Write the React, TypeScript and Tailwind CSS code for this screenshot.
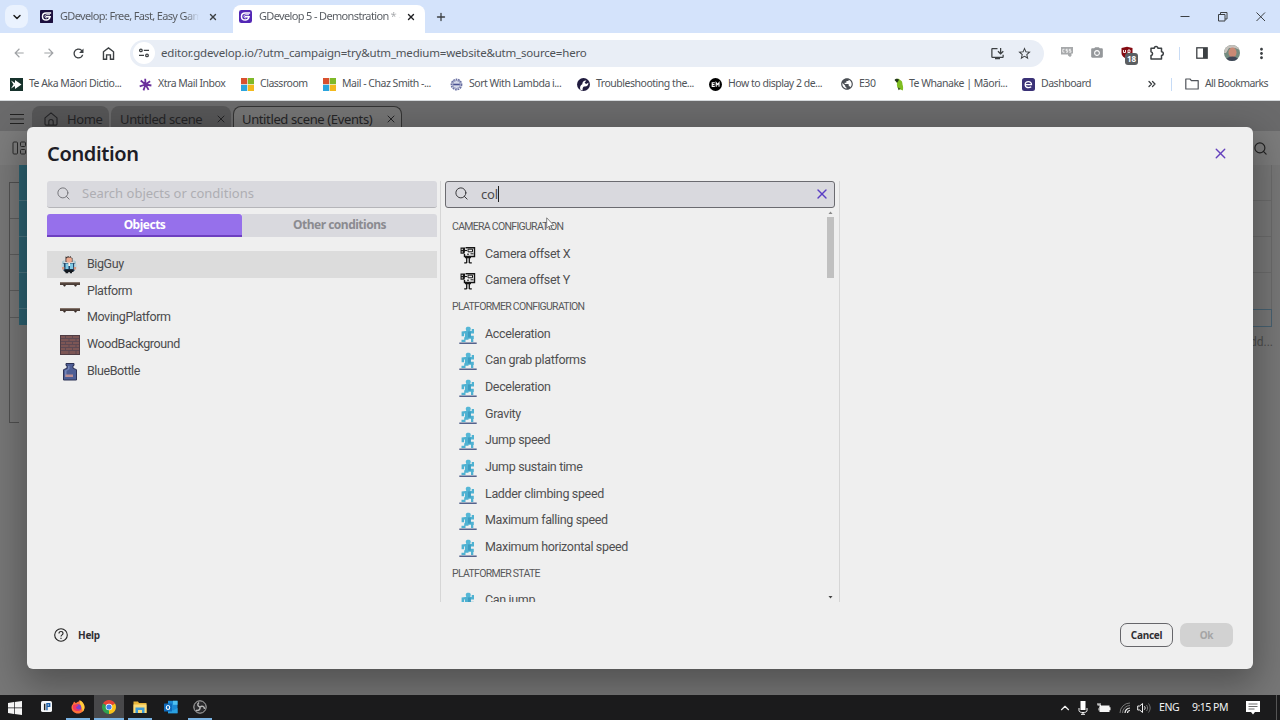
import React from 'react';
import { ChevronDown, ChevronUp, ChevronsRight, Plus, Search, X } from 'lucide-react';
import {
  MdArrowBack,
  MdArrowForward,
  MdMoreVert,
  MdOutlineInstallDesktop,
  MdPhotoCamera,
  MdPublic,
  MdRefresh,
  MdStarBorder,
} from 'react-icons/md';

type IconProps = { className?: string };

const GDevelopIcon = ({ className, dark }: IconProps & { dark?: boolean }) => (
  <svg className={className} viewBox="0 0 14 14">
    <rect width="14" height="14" rx={dark ? 0.5 : 2.5} fill={dark ? '#1b0f3d' : '#5327b5'} />
    <path d="M12 3.2H6.5C4 3.2 2.7 5 2.7 6.9c0 2.3 1.7 3.9 4 3.9 2.2 0 3.6-1 4.2-3.6H6.4" fill="none" stroke="#fff" strokeWidth="1.6" />
    <path d="M10.8 5.1H7c-1 0-1.6.8-1.6 1.7C5.4 8 6 8.7 7.2 8.7" fill="none" stroke="#fff" strokeWidth="1" />
  </svg>
);

const HouseIcon = ({ className }: IconProps) => (
  <svg className={className} viewBox="0 0 14 14" fill="none" stroke="currentColor" strokeWidth="1.3">
    <path d="M2.3 5.4 7 1.8l4.7 3.6v7H8.8V8.3H5.2v4.1H2.3z" />
  </svg>
);

const RoundHouseIcon = ({ className }: IconProps) => (
  <svg className={className} viewBox="0 0 14 14" fill="none" stroke="currentColor" strokeWidth="1.1" strokeLinejoin="round">
    <path d="M1 5.9 7 .9l6 5v6.2c0 .6-.4 1-1 1H2c-.6 0-1-.4-1-1z" />
    <path d="M4.8 13V9.7a2.2 2.2 0 0 1 4.4 0V13" />
  </svg>
);

const TuneIcon = ({ className }: IconProps) => (
  <svg className={className} viewBox="0 0 12 12" fill="none" stroke="#3c4043" strokeWidth="1.3">
    <circle cx="2.9" cy="3.4" r="1.3" />
    <path d="M5.8 3.4H11M1 8.4h5" />
    <circle cx="9" cy="8.4" r="1.3" />
  </svg>
);

const PuzzleIcon = ({ className }: IconProps) => (
  <svg className={className} viewBox="0 0 16 16" fill="none" stroke="#3c4043" strokeWidth="1.5" strokeLinejoin="round">
    <path d="M2 3.3h3.3a1.8 1.8 0 0 1 3.6 0h3.6v3.5a1.8 1.8 0 0 1 0 3.6v3.6H2v-3.4a2 2 0 0 0 0-3.9z" />
  </svg>
);

const FolderIcon = ({ className }: IconProps) => (
  <svg className={className} viewBox="0 0 14 12" fill="none" stroke="#50545a" strokeWidth="1.2" strokeLinejoin="round">
    <path d="M.8 1H5l1.4 1.6h6.8V11H.8z" />
  </svg>
);

const MicrosoftIcon = ({ className }: IconProps) => (
  <svg className={className} viewBox="0 0 13 13">
    <rect width="6.2" height="6.2" fill="#d9502e" />
    <rect x="6.8" width="6.2" height="6.2" fill="#7fb928" />
    <rect y="6.8" width="6.2" height="6.2" fill="#2aa4de" />
    <rect x="6.8" y="6.8" width="6.2" height="6.2" fill="#f3b91c" />
  </svg>
);

const TeAkaIcon = ({ className }: IconProps) => (
  <svg className={className} viewBox="0 0 13 13">
    <rect width="13" height="13" fill="#16322c" />
    <path d="M1 2.5 5 5V2l6.5 4.5L5 11V8l-4 2.5 2.5-4z" fill="#fff" />
  </svg>
);

const XtraIcon = ({ className }: IconProps) => (
  <svg className={className} viewBox="0 0 13 13" fill="none" stroke="#6a2f9c" strokeWidth="1.8">
    <path d="M6.5 6.5 6.2.8M6.5 6.5l4.6-3.3M6.5 6.5l5.9 1M6.5 6.5l3.1 5.4M6.5 6.5l-2 5.9M6.5 6.5.7 8.4M6.5 6.5l-4.8-4" />
  </svg>
);

const LambdaIcon = ({ className }: IconProps) => (
  <svg className={className} viewBox="0 0 13 13" fill="none">
    <circle cx="6.5" cy="6.5" r="5.1" stroke="#6a70a2" strokeWidth="1.6" strokeDasharray="1.8 .7" />
    <circle cx="6.5" cy="6.5" r="4" fill="#d7dbea" stroke="#5b6299" strokeWidth=".6" />
    <path d="M3.2 6.5h6.6" stroke="#4a5190" strokeWidth="1.6" />
  </svg>
);

const WrenchIcon = ({ className }: IconProps) => (
  <svg className={className} viewBox="0 0 13 13">
    <circle cx="6.5" cy="6.5" r="6.5" fill="#211c3f" />
    <path d="M3.3 11.7C2.6 9 3.5 7 5.3 6.3 5.2 3.8 7 2.3 9.4 2.5L7.6 4.7l1.5 1.4 2.3-1.4c.2 2.4-1.7 4.3-4.4 3.7C5.9 9 5.4 10.4 5.6 12.3z" fill="#fff" />
  </svg>
);

const EmIcon = ({ className }: IconProps) => (
  <svg className={className} viewBox="0 0 13 13">
    <circle cx="6.5" cy="6.5" r="6.5" fill="#000" />
    <path d="M5.8 4.7H3.2v3.7h2.6M3.2 6.5h2.3M7.2 8.8V4.7l1.4 1.8L10 4.7v4.1" fill="none" stroke="#fff" strokeWidth="1.1" />
  </svg>
);

const ParrotIcon = ({ className }: IconProps) => (
  <svg className={className} viewBox="0 0 13 13">
    <path d="M2 2C3.5.3 6 .5 7.200 2c1.600.6 2.300 2.200 2.300 4.500.8 2 .8 4 .3 6L6.200 11C4 9.800 3.600 7.500 4 5z" fill="#7fbe21" />
    <path d="M1.5 2C2.5.6 5 .4 6 1.800L4.200 4.800z" fill="#23351c" />
    <path d="m4.6 9.2 3 1.6-2 1.5z" fill="#38551c" />
  </svg>
);

const DashboardIcon = ({ className }: IconProps) => (
  <svg className={className} viewBox="0 0 13 13">
    <rect width="13" height="13" rx="2.5" fill="#3b3277" />
    <path d="M3.5 6.7h6c.3-4-6.3-4-6.3 0 0 3.3 4 3.5 6 2" fill="none" stroke="#fff" strokeWidth="1.3" />
  </svg>
);

const BOOKMARKS = [
  { icon: <TeAkaIcon className="size-[13px]" />, label: 'Te Aka Māori Dictio...', style: 'w-[129px]' },
  { icon: <XtraIcon className="size-[13px]" />, label: 'Xtra Mail Inbox', style: 'w-[102px]' },
  { icon: <MicrosoftIcon className="size-[13px]" />, label: 'Classroom', style: 'w-[82px]' },
  { icon: <MicrosoftIcon className="size-[13px]" />, label: 'Mail - Chaz Smith -...', style: 'w-[127px]' },
  { icon: <LambdaIcon className="size-[13px]" />, label: 'Sort With Lambda i...', style: 'w-[127px]' },
  { icon: <WrenchIcon className="size-[13px]" />, label: 'Troubleshooting the...', style: 'w-[132px]' },
  { icon: <EmIcon className="size-[13px]" />, label: 'How to display 2 de...', style: 'w-[131px]' },
  { icon: <MdPublic className="-mr-px size-[14px] text-[#4b4f54]" />, label: 'E30', style: 'w-[53px]' },
  { icon: <ParrotIcon className="-mr-[3px] size-[13px]" />, label: 'Te Whanake | Māori...', style: 'w-[129px]' },
  { icon: <DashboardIcon className="size-[13px]" />, label: 'Dashboard', style: 'w-[120px]' },
];

function TabStrip() {
  return (
    <div className="flex h-[33px] shrink-0 items-center bg-[#d4e3fb] pl-[5px]">
      <div className="flex size-[23px] items-center justify-center rounded-lg bg-[#eaf2fe]">
        <ChevronDown className="size-3 text-[#1f1f1f]" strokeWidth={3} />
      </div>
      <div className="flex w-[205px] items-center pl-3">
        <GDevelopIcon dark className="size-[13px] shrink-0" />
        <span className="ml-[7px] w-[139px] bg-linear-to-r from-[#54585e] from-90% to-transparent bg-clip-text text-[11px] tracking-[-0.65px] whitespace-nowrap text-transparent">
          GDevelop: Free, Fast, Easy Game
        </span>
        <X className="ml-[9px] size-[10px] text-[#3c4043]" strokeWidth={3.2} />
      </div>
      <div className="mt-[5px] flex h-7 w-[192px] items-center rounded-t-lg bg-white pb-[5px] pl-[6px]">
        <GDevelopIcon className="size-[13px] shrink-0" />
        <span className="ml-[7px] w-[142px] bg-linear-to-r from-[#54585e] from-90% to-transparent bg-clip-text text-[11px] tracking-[-0.65px] whitespace-nowrap text-transparent">
          GDevelop 5 - Demonstration * -
        </span>
        <X className="ml-[5px] size-[10px] text-[#202124]" strokeWidth={3.2} />
      </div>
      <Plus className="ml-[10px] size-3 text-[#3c4043]" strokeWidth={2.6} />
      <div className="ml-auto flex items-center gap-[27px] pr-[14px] text-[#3c4043]">
        <svg className="size-[11px]" viewBox="0 0 11 11" stroke="currentColor"><path d="M1.5 5.5h9" /></svg>
        <svg className="size-[11px]" viewBox="0 0 11 11" stroke="currentColor" fill="none"><path d="M1.5 3.5H8V10H1.5zM3.5 3.5v-2H10V8H8" /></svg>
        <svg className="size-[11px]" viewBox="0 0 11 11" stroke="currentColor"><path d="m1.5 1.5 8.500 8.500M10 1.500 1.500 10" /></svg>
      </div>
    </div>
  );
}

function AddressBar() {
  return (
    <div className="flex h-10 shrink-0 items-center bg-white pl-3 text-[#3c4043]">
      <MdArrowBack className="size-[14px] text-[#a0a3a6]" />
      <MdArrowForward className="ml-4 size-[14px] text-[#a0a3a6]" />
      <MdRefresh className="ml-[15px] size-[15px]" />
      <HouseIcon className="ml-[15px] size-[15px]" />
      <div className="ml-[14px] flex h-[27px] w-[914px] items-center rounded-full bg-[#e9eef6] pl-[3px]">
        <div className="flex size-[22px] items-center justify-center rounded-full bg-white">
          <TuneIcon className="size-3" />
        </div>
        <span className="ml-[6px] text-[11.5px] tracking-[-0.2px] text-[#4f5358]">
          editor.gdevelop.io/?utm_campaign=try&amp;utm_medium=website&amp;utm_source=hero
        </span>
        <MdOutlineInstallDesktop className="ml-auto size-[15px]" />
        <MdStarBorder className="mr-3 ml-3 size-[15px]" />
      </div>
      <svg className="ml-4 size-[14px]" viewBox="0 0 14 14">
        <path d="M1 1h12v6.500h-1.500v2.200L10 11 8 9.500V8.500H1z" fill="#a7a9ab" />
        <path d="M4.500 3.300H2.800v2.900h1.700M7.700 3.300H6v1.400h1.700v1.500H6M10.900 3.300H9.200v1.400h1.700v1.500H9.200" fill="none" stroke="#fff" strokeWidth=".8" />
      </svg>
      <MdPhotoCamera className="ml-4 size-[14px] text-[#95989b]" />
      <div className="relative ml-4 size-[14px]">
        <svg className="size-[14px]" viewBox="0 0 14 14">
          <path d="M7 .8 12.500 2v5c0 3-2.500 4.700-5.500 6-3-1.300-5.500-3-5.500-6V2z" fill="#850b12" />
          <path d="M3.500 4v2.500h2V4M8 7V4h2v2.500H8" fill="none" stroke="#fff" strokeWidth=".9" />
        </svg>
        <span className="absolute top-[7px] left-[5px] flex h-3 w-[13px] items-center justify-center rounded-[3px] bg-[#5b5e61] text-[8px] font-bold text-white">18</span>
      </div>
      <PuzzleIcon className="ml-[15px] size-4" />
      <div className="ml-[14px] h-[13px] w-px bg-[#c9dcf5]" />
      <svg className="ml-4 size-3" viewBox="0 0 12 12">
        <rect x=".8" y=".8" width="10.4" height="10.4" fill="none" stroke="#3c4043" strokeWidth="1.3" />
        <path d="M7 1h4v10H7z" fill="#3c4043" />
      </svg>
      <svg className="ml-4 size-4 rounded-full" viewBox="0 0 16 16">
        <rect width="16" height="16" fill="#748b80" />
        <path d="M0 0h16v5L11 3H5L2 8H0z" fill="#c5c0bb" />
        <ellipse cx="8.5" cy="7.5" rx="4" ry="5" fill="#c98975" />
        <path d="M1 16c1-3 4-4.500 7.500-4.500S14 13 15 16z" fill="#3f4657" />
      </svg>
      <MdMoreVert className="ml-[13px] size-[17px]" />
    </div>
  );
}

function BookmarksBar() {
  return (
    <div className="flex h-[28px] shrink-0 items-center border-b border-[#d5d9dc] bg-white pb-[5px] pl-[10px]">
      {BOOKMARKS.map(b => (
        <div key={b.label} className={`flex shrink-0 items-center gap-[6px] ${b.style}`}>
          {b.icon}
          <span className="text-[10.5px] tracking-[-0.48px] whitespace-nowrap text-[#505459]">{b.label}</span>
        </div>
      ))}
      <ChevronsRight className="ml-1 size-3 text-[#3c4043]" strokeWidth={2.6} />
      <div className="ml-[13px] h-[13px] w-px bg-[#c6dbf6]" />
      <FolderIcon className="ml-[13px] h-3 w-[14px]" />
      <span className="ml-[6px] text-[10.5px] tracking-[-0.6px] whitespace-nowrap text-[#505459]">All Bookmarks</span>
    </div>
  );
}

// Editor page as seen through the dialog's overlay
function DimmedEditor() {
  return (
    <div className="flex h-full flex-col bg-[#777777]">
      <div className="flex h-[30px] shrink-0 items-end bg-[#6a6a6b] pl-[10px] text-[13px] leading-[22px] tracking-[-0.37px] text-[#242426]">
        <svg className="mb-[6px] h-3 w-[14px]" viewBox="0 0 14 12" stroke="#222" strokeWidth="1.2"><path d="M0 1.5h14M0 6h14M0 10.500h14" /></svg>
        <div className="ml-2 flex h-[25px] w-[77px] items-center rounded-t-lg bg-[#565657] pl-3">
          <RoundHouseIcon className="size-[14px]" />
          <span className="ml-[9px]">Home</span>
        </div>
        <div className="ml-[2px] flex h-[25px] w-[120px] items-center justify-between rounded-t-lg bg-[#565657] pr-1 pl-[9px]">
          <span>Untitled scene</span>
          <X className="size-[12px]" strokeWidth={2} />
        </div>
        <div className="ml-[2px] flex h-[25px] w-[169px] items-center justify-between rounded-t-lg border border-b-0 border-[#333] bg-[#747474] pr-1 pl-[8px]">
          <span className="whitespace-nowrap">Untitled scene (Events)</span>
          <X className="size-[12px]" strokeWidth={2} />
        </div>
      </div>
      <div className="flex h-[34px] shrink-0 items-center justify-between bg-[#7c7c7c] px-3">
        <svg className="h-[14px] w-4" viewBox="0 0 16 14" fill="none" stroke="#2b2b2b">
          <rect x="1" y="1" width="4.5" height="12" rx="1" />
          <rect x="8.5" y="1" width="5" height="4.5" rx="1" />
          <rect x="8.5" y="8.5" width="5" height="4.5" rx="1" />
        </svg>
        <Search className="size-[15px] text-[#222]" strokeWidth={1.9} />
      </div>
      <div className="flex flex-1 justify-between">
        <div className="flex pl-[9px]">
          <div className="mt-[17px] flex h-[241px] w-[10px] flex-col border border-r-0 border-[#505050]">
            <div className="h-9 border-b border-[#5c5c5c]" />
            <div className="h-9 border-b border-[#5c5c5c]" />
            <div className="h-9 border-b border-[#5c5c5c]" />
            <div className="h-[27px] border-b border-[#5c5c5c]" />
          </div>
          <div className="flex h-[160px] w-8 flex-col bg-[#2c6170]">
            <div className="h-9 border-b border-[#4b7480]" />
            <div className="h-9 border-b border-[#4b7480]" />
            <div className="h-9 border-b border-[#4b7480]" />
            <div className="h-9 border-b border-[#4b7480]" />
          </div>
        </div>
        <div className="w-[40px] pr-2 text-right font-['Roboto'] text-[12px] text-[#4c4c4c]">
          <div className="h-9 border-r border-b border-[#6b6b6b]" />
          <div className="h-9 border-r border-b border-[#6b6b6b]" />
          <div className="h-9 border-r border-b border-[#6b6b6b]" />
          <div className="h-9 border-r border-[#6b6b6b]" />
          <div className="h-[18px] border border-[#476171]" />
          <div className="-mr-2 pt-[6px] pr-[7px]">dd...</div>
        </div>
      </div>
    </div>
  );
}

const BigGuyIcon = () => (
  <svg className="size-5" viewBox="0 0 20 20">
    <path d="M2 6.500 4.500 5v4H2zM13.500 5 16 6.500V9h-2.500z" fill="#a9c6d0" />
    <path d="M5.500 1.500 7 2l1-1 1.500 1 1.500-1v1.500l1.500.5V7h-7z" fill="#39302f" />
    <rect x="6.3" y="2.6" width="5.6" height="5" rx="1.5" fill="#eda98f" />
    <path d="M3.500 8h11v8h-11z" fill="#25496b" />
    <path d="M5.500 8.500h3V14h-3zM10 8.500h3V14h-3z" fill="#7fcae6" />
    <path d="M8.300 8h1.700v3H8.300z" fill="#f4f0e8" />
    <path d="M1.500 9h2.300v3.500H1.500zM14.300 9h2.300v3.500h-2.300z" fill="#b9d6e0" />
    <path d="M2 12h2.300v2.500H2zM13.800 12h2.300v2.500h-2.300z" fill="#d79a83" />
    <path d="M4.500 14.500h9V17H12v1.200H9.800V17H8.300v1.200H5.500V17h-1z" fill="#151a20" />
  </svg>
);

const PlatformIcon = () => (
  <svg className="size-5" viewBox="0 0 20 20">
    <path d="M0 0h20v3H0z" fill="#4b3d36" />
    <path d="M0 0h20v1.200H0z" fill="#83736a" />
    <path d="M3 3h3l-1 1.500H4zM14 3h3l-1 1.500h-1z" fill="#362b26" />
  </svg>
);

const BrickIcon = () => (
  <svg className="size-5" viewBox="0 0 20 20">
    <rect x=".5" y=".5" width="19" height="19" fill="#7d5655" stroke="#4f3c44" />
    <path d="M1 3.500h18M1 6.500h18M1 9.500h18M1 12.500h18M1 15.500h18M5.500 1v2.500M12.500 1v2.500M9 3.500v3M16 3.500v3M5.500 6.500v3M12.500 6.500v3M9 9.500v3M16 9.500v3M5.500 12.500v3M12.500 12.500v3M9 15.500V19M16 15.500V19" stroke="#5e4953" fill="none" />
  </svg>
);

const BottleIcon = () => (
  <svg className="size-5" viewBox="0 0 20 20">
    <path d="M6 1.500h8v2h-1v2.700l3.500 1.500V18h-13V7.700L7 6.200V3.500H6z" fill="#4f5f96" stroke="#2d3255" />
    <path d="M8 4h1.500v3L6.500 9v6H5V8.500L8 7z" fill="#7585b8" />
    <path d="M5.500 12.500h7.500v2.500H5.500z" fill="#bd8f93" />
  </svg>
);

const CameraIcon = () => (
  <svg className="size-[18px]" viewBox="0 0 18 18">
    <path d="M1.500 1.500H6v6.200H1.500z" fill="#151515" />
    <path d="M2.600 2.700h1.200v1.200H2.600zM2.600 5.300h1.200v1.200H2.600z" fill="#eee" />
    <path d="M6.500 1.700h9v8.800h-10V8" fill="#f2f2f2" stroke="#151515" strokeWidth="1.4" />
    <path d="M9 3.200h4.500v2.600H9zM8 8.200h2M11.500 7.800h3" fill="none" stroke="#151515" strokeWidth="1" />
    <path d="M5.500 4.500h2.500" stroke="#151515" strokeWidth="1.2" />
    <path d="M7.700 11v6M10.300 11v6M5.200 16.800h2.500M10.300 16.800h2.500M6 11.600h6" stroke="#151515" strokeWidth="1.3" fill="none" />
  </svg>
);

const RunnerIcon = () => (
  <svg className="size-[18px]" viewBox="0 0 18 18">
    <path d="M6.500 5h6.200V3H15v4.600h-3.200v2.100h3v3.400h-.5v2.900H12v-3.300H9.500v1h-3V16h-4v-2.300h2.700v-2.500h.7V7.500H5v2.700H2.600V5.500z" fill="#4fb2d2" />
    <rect x="6.9" y=".7" width="4.7" height="4.5" rx="1.5" fill="#55b7d6" />
    <path d="M9 5.500h2.800v6H9z" fill="#3d9dc2" />
    <path d="M.3 17.200h17.400" stroke="#2d3f74" strokeWidth="1.2" />
  </svg>
);

const OBJECTS = [
  { name: 'BigGuy', icon: <BigGuyIcon />, selected: true },
  { name: 'Platform', icon: <PlatformIcon /> },
  { name: 'MovingPlatform', icon: <PlatformIcon /> },
  { name: 'WoodBackground', icon: <BrickIcon /> },
  { name: 'BlueBottle', icon: <BottleIcon /> },
];

const GROUPS = [
  { title: 'CAMERA CONFIGURATION', icon: <CameraIcon />, items: ['Camera offset X', 'Camera offset Y'] },
  {
    title: 'PLATFORMER CONFIGURATION',
    icon: <RunnerIcon />,
    items: [
      'Acceleration',
      'Can grab platforms',
      'Deceleration',
      'Gravity',
      'Jump speed',
      'Jump sustain time',
      'Ladder climbing speed',
      'Maximum falling speed',
      'Maximum horizontal speed',
    ],
  },
  { title: 'PLATFORMER STATE', icon: <RunnerIcon />, items: ['Can jump'] },
];

function ObjectsColumn() {
  return (
    <div className="w-[390px]">
      <div className="flex h-[27px] items-center rounded-[3px] border-b border-[#b5b5b9] bg-[#d9d9de] pb-px pl-[9px]">
        <Search className="size-[15px] text-[#77777c]" strokeWidth={1.6} />
        <span className="ml-[11px] text-[13px] text-[#aeaeb3]">Search objects or conditions</span>
      </div>
      <div className="mt-[6px] flex h-[23px] text-center text-[12px] leading-[21px] font-bold tracking-[-0.5px]">
        <div className="w-[195px] rounded-t-[3px] border-b-2 border-[#6d3fc0] bg-[#9670eb] text-white">Objects</div>
        <div className="w-[195px] rounded-tr-[3px] bg-[#d9d9de] text-[#8b8b90]">Other conditions</div>
      </div>
      <div className="mt-[14px]">
        {OBJECTS.map(o => (
          <div key={o.name} className={`flex h-[26.7px] pl-[13px] ${o.selected ? 'bg-[#dcdcdc]' : ''}`}>
            <div className="pt-[4px]">{o.icon}</div>
            <span className="ml-[7px] font-['Roboto'] text-[12.5px] leading-[25px] tracking-[-0.42px] text-[#4b4b4d]">{o.name}</span>
          </div>
        ))}
      </div>
    </div>
  );
}

function ConditionsColumn() {
  return (
    <div className="flex h-[421px] w-[400px] flex-col border-x border-[#d6d6d6] px-1">
      <div className="flex h-[27px] shrink-0 items-center rounded-[3px] border border-[#6b6b70] bg-[#d9d9de] pr-[4px] pb-[2px] pl-2">
        <Search className="size-[15px] text-[#39393c]" strokeWidth={1.6} />
        <span className="ml-3 border-r border-[#222] text-[13px] leading-4 tracking-[-0.2px] text-[#4b4b4d]">col</span>
        <X className="ml-auto size-[16px] text-[#5b3fc4]" strokeWidth={2} />
      </div>
      <div className="flex min-h-0 flex-1">
        <div className="flex-1 overflow-hidden pt-[5px] font-['Roboto']">
          {GROUPS.map(g => (
            <div key={g.title}>
              <div className="h-[26.67px] pl-[7px] text-[10.5px] leading-[27px] tracking-[-0.7px] text-[#59595b]">{g.title}</div>
              {g.items.map(item => (
                <div key={item} className="flex h-[26.67px] pl-[14px]">
                  <div className="pt-[6px]">{g.icon}</div>
                  <span className="ml-2 text-[12.5px] leading-[27px] tracking-[-0.34px] text-[#4f4f51]">{item}</span>
                </div>
              ))}
            </div>
          ))}
        </div>
        <div className="mr-px flex w-[7px] flex-col items-center justify-between pt-[3px] pb-[3px]">
          <svg className="h-1 w-[5px]" viewBox="0 0 5 4"><path d="m2.500.5 2 2.500h-4z" fill="#888" /></svg>
          <div className="mt-[2px] mb-auto h-[61px] w-[7px] bg-[#c0c0c0]" />
          <svg className="h-1 w-[5px]" viewBox="0 0 5 4"><path d="m2.500 3.500 2-2.500h-4z" fill="#444" /></svg>
        </div>
      </div>
    </div>
  );
}

function ConditionDialog() {
  return (
    <div className="absolute top-[26px] left-[27px] flex h-[542px] w-[1226px] flex-col rounded-[6px] bg-[#efefef] pl-5 shadow-[0_12px_36px_4px_rgba(0,0,0,0.32)]">
      <div className="flex h-[54px] items-center justify-between pr-[24px] pb-px">
        <h1 className="text-[20px] font-semibold tracking-[-0.35px] text-[#1d1d26]">Condition</h1>
        <X className="size-[17px] text-[#6440bd]" strokeWidth={1.9} />
      </div>
      <div className="flex gap-[3px]">
        <ObjectsColumn />
        <ConditionsColumn />
      </div>
      <div className="mt-[21px] flex h-6 items-center pr-5 text-[10px] font-bold tracking-[-0.25px]">
        <svg className="ml-[7px] size-[14px]" viewBox="0 0 14 14" fill="none" stroke="#222" strokeWidth="1.1">
          <circle cx="7" cy="7" r="6.3" />
          <path d="M5 5.400c0-2.500 4-2.500 4 0C9 7 7 6.800 7 8.500M7 9.700v1.200" />
        </svg>
        <span className="ml-[10px] text-[#303034]">Help</span>
        <button className="ml-auto h-6 w-[53px] rounded-[7px] border border-[#66666a] text-[#303034]">Cancel</button>
        <button className="ml-[7px] h-6 w-[53px] rounded-[7px] bg-[#d2d2d2] text-[#a5a5a5]">Ok</button>
      </div>
      {/* Mouse pointer */}
      <svg className="absolute top-[90px] left-[519px] h-[14px] w-[10px]" viewBox="0 0 10 14">
        <path d="M.7.8v10.400l2.400-2.200 1.600 3.700 1.500-.7-1.600-3.500h3.300z" fill="#fff" stroke="#666" strokeWidth=".8" />
      </svg>
    </div>
  );
}

const FirefoxIcon = () => (
  <svg className="size-[14px]" viewBox="0 0 14 14">
    <path d="M2 4 3 1.500 5 3.200C7 1 9 2 8.500.3c2.500 1 5.200 4 5 7.200-.3 3.500-3 6-6.500 6S.5 11 .5 7.500C.5 6 1 5 2 4z" fill="#ff7139" />
    <path d="M8.500.3c2.500 1 5.200 4 5 7.200-.2 2-1 3.500-2 4.500C12 8 9 6.500 8.500.3z" fill="#ffcd3c" />
    <circle cx="7" cy="7.5" r="3.2" fill="#7a43c9" />
    <path d="M2 5c2-1 4-.5 5.500.5L5 7c0 2 2.500 3 4.500 2C8 12 3 11.500 2 8.500z" fill="#f5375f" />
  </svg>
);

const ChromeIcon = () => (
  <svg className="size-[14px]" viewBox="0 0 14 14">
    <path d="M7 7 .94 3.500A7 7 0 0 1 13.060 3.500z" fill="#e64435" />
    <path d="M7 7 13.060 3.500A7 7 0 0 1 7 14z" fill="#fbc31a" />
    <path d="M7 7v7A7 7 0 0 1 .94 3.500z" fill="#2fa24f" />
    <circle cx="7" cy="7" r="3.3" fill="#fff" />
    <circle cx="7" cy="7" r="2.6" fill="#3f7fe8" />
  </svg>
);

const ExplorerIcon = () => (
  <svg className="size-[14px]" viewBox="0 0 14 14">
    <path d="M.5 1.500h4.500l1 1.500h7.500v10H.5z" fill="#e8b53a" />
    <path d="M.5 4.500h13V13H.5z" fill="#fbdc7a" />
    <path d="M2.500 13V7.500h9V13h-2.500v-3H5v3z" fill="#3f9cd8" />
  </svg>
);

const OutlookIcon = () => (
  <svg className="size-[14px]" viewBox="0 0 14 14">
    <path d="M4 .8h9.500v12.400H4z" fill="#1b8ad6" />
    <path d="M9 .8h4.500v4H9z" fill="#50c2f3" />
    <path d="m4 8 5 2.500L13.500 8v5.200H4z" fill="#2aa0e0" />
    <rect y="3.5" width="8" height="8" rx=".6" fill="#0f6cbd" />
    <ellipse cx="4" cy="7.5" rx="1.7" ry="2" fill="none" stroke="#fff" strokeWidth="1.1" />
  </svg>
);

const ObsIcon = () => (
  <svg className="size-[14px]" viewBox="0 0 14 14" fill="none" stroke="#b5b5b5">
    <circle cx="7" cy="7" r="6.2" fill="#2a2a2c" />
    <path d="M7 7C4.500 6.500 4 4 6 2.500M7 7c2-1.700 4.500-.5 4.500 2M7 7c.5 2.500-1.500 4.200-4 3.300" strokeWidth="1.5" />
  </svg>
);

const IdeIcon = () => (
  <svg className="size-[11px]" viewBox="0 0 12 12">
    <rect width="12" height="12" rx="2" fill="#f4f6f8" />
    <path d="M4 3v7" stroke="#222" strokeWidth="1.6" />
    <path d="M6.500 10V3h3v2.700H6.500" stroke="#1d5fa8" strokeWidth="1.5" fill="none" />
  </svg>
);

const TASKS = [
  { id: 'ide', icon: <IdeIcon />, style: 'w-[35px] mr-[2px] border-transparent' },
  { id: 'firefox', icon: <FirefoxIcon />, style: 'w-6 mr-1 border-[#7ab3e3]' },
  { id: 'chrome', icon: <ChromeIcon />, style: 'w-[30px] mr-1 border-[#7ab3e3] bg-[#48484a]' },
  { id: 'explorer', icon: <ExplorerIcon />, style: 'w-6 mr-1 border-[#7ab3e3]' },
  { id: 'outlook', icon: <OutlookIcon />, style: 'w-[29px] mr-[3px] border-transparent' },
  { id: 'obs', icon: <ObsIcon />, style: 'w-6 border-[#7ab3e3]' },
];

function Taskbar() {
  return (
    <div className="flex h-[25px] shrink-0 items-stretch bg-[#1b1b1c] text-[#f2f2f2]">
      <div className="flex w-[29px] items-center justify-center">
        <svg className="size-[14px]" viewBox="0 0 14 14" fill="#f5f5f5"><path d="M0 2 6 1v5.600H0zM6.700.9 14 0v6.600H6.700zM0 7.300h6v5.600L0 12zM6.700 7.300H14V14l-7.300-1z" /></svg>
      </div>
      {TASKS.map(t => (
        <div key={t.id} className={`flex items-center justify-center border-b-2 ${t.style}`}>
          {t.icon}
        </div>
      ))}
      <div className="ml-auto flex items-center text-[10.5px]">
        <ChevronUp className="size-[14px]" strokeWidth={2} />
        <svg className="ml-[6px] h-[14px] w-[10px]" viewBox="0 0 10 14">
          <rect x="2.5" width="5" height="9" fill="#fff" />
          <path d="M1 7v2.500C1 11 3 11.500 5 11.500S9 11 9 9.500V7M5 11.500V13M3 13.300h4" stroke="#fff" fill="none" />
        </svg>
        <svg className="ml-[9px] h-3 w-[14px]" viewBox="0 0 14 12">
          <path d="M2.500 3.500h10v1.700h1v3h-1v1.800h-10z" fill="#f5f5f5" />
          <path d="M1 1v2M3 1v2M.5 3h3v2L2 6.500v2" stroke="#f5f5f5" fill="none" />
        </svg>
        <svg className="ml-2 size-3" viewBox="0 0 12 12" fill="none">
          <path d="M1 11A10 10 0 0 1 11 1M3.500 11A7.500 7.500 0 0 1 11 3.500" stroke="#777" />
          <path d="M6 11a5 5 0 0 1 5-5M8.500 11A2.500 2.500 0 0 1 11 8.500" stroke="#eee" strokeWidth="1.2" />
        </svg>
        <svg className="ml-[6px] h-3 w-[14px]" viewBox="0 0 14 12" fill="none" stroke="#f2f2f2">
          <path d="M.7 4h2L5.500 1.500v9L2.700 8h-2zM7.500 4.300c.8 1 .8 2.400 0 3.400" />
          <path d="M9.500 3c1.500 2 1.500 4 0 6M11.500 1.500c2.200 3 2.200 6 0 9" stroke="#777" />
        </svg>
        <span className="ml-[8px] w-[33px] tracking-[-0.4px]">ENG</span>
        <span className="w-[54px] tracking-[-0.5px] whitespace-nowrap">9:15 PM</span>
        <svg className="size-[14px]" viewBox="0 0 14 14">
          <path d="M0 0h14v11H9l-2 2.500L5 11H0z" fill="#fff" />
          <path d="M2.500 3h9M2.500 5.500h9M2.500 8h6" stroke="#444" strokeWidth=".8" />
        </svg>
        <div className="ml-[16px] h-full w-px bg-[#555]" />
        <div className="w-[3px]" />
      </div>
    </div>
  );
}

export default function App() {
  return (
    <div className="flex h-[720px] w-[1280px] flex-col overflow-hidden font-['Noto_Sans','Open_Sans',sans-serif]">
      <TabStrip />
      <AddressBar />
      <BookmarksBar />
      <div className="relative min-h-0 flex-1 overflow-hidden">
        <DimmedEditor />
        <ConditionDialog />
      </div>
      <Taskbar />
    </div>
  );
}
